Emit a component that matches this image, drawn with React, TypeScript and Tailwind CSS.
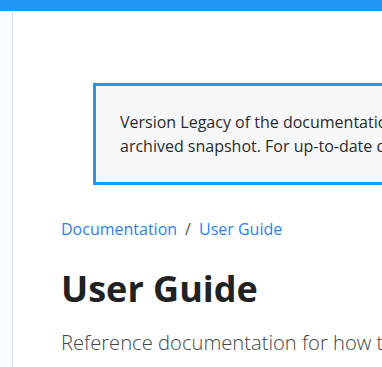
export default function App() {
  return (
    <div className="w-[382px] h-[367px] overflow-hidden flex flex-col bg-white font-['Open_Sans',sans-serif]">
      <div className="h-[11px] shrink-0 bg-[#2196f3]" />
      <div className="flex flex-1 min-h-0">
        <aside className="w-[13px] shrink-0 bg-[#f7fbff] border-r border-[#dce1e6]" />
        <main className="flex-1 min-w-0 overflow-hidden pl-[48px] pt-[72px]">
          <div className="ml-[32px] w-[760px] border-[3px] border-[#2196f3] bg-[#f6f7f9] px-[24px] py-[24px] text-[16px] leading-[24px] text-[#2b2b2b] whitespace-nowrap">
            Version Legacy of the documentation is an
            <br />
            archived snapshot. For up-to-date documentation, see the latest version.
          </div>
          <nav className="mt-[32px] flex items-center text-[16px] leading-[24px] text-[#2f80ed] whitespace-nowrap">
            <a href="#">Documentation</a>
            <span className="mx-[8px] text-[#555]">/</span>
            <a href="#">User Guide</a>
          </nav>
          <h1 className="mt-[28px] text-[36px] leading-[40px] font-bold text-[#222] whitespace-nowrap">User Guide</h1>
          <p className="mt-[18px] text-[20.2px] leading-[30px] font-light text-[#444] whitespace-nowrap">
            Reference documentation for how to use the product.
          </p>
        </main>
      </div>
    </div>
  );
}
